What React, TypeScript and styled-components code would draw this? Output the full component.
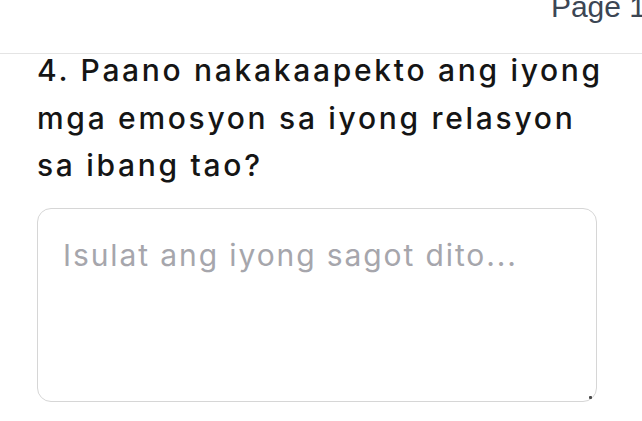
import React from 'react';
import styled, { createGlobalStyle } from 'styled-components';

const GlobalStyle = createGlobalStyle`
  html, body {
    margin: 0;
    padding: 0;
    background: #ffffff;
    overflow: hidden;
  }
  * {
    box-sizing: border-box;
  }
`;

const Styled = {
  Page: styled.div`
    width: 642px;
    height: 421px;
    display: flex;
    flex-direction: column;
    background: #ffffff;
  `,
  TopBar: styled.header`
    height: 54px;
    display: flex;
    justify-content: flex-end;
    align-items: flex-start;
    border-bottom: 1px solid #e4e4e4;
  `,
  PageLabel: styled.span`
    margin-top: -8px;
    margin-right: -4px;
    font-family: 'Liberation Sans', Arial, sans-serif;
    font-size: 30px;
    line-height: 30px;
    color: #3c4654;
    white-space: nowrap;
  `,
  Content: styled.main`
    display: flex;
    flex-direction: column;
    gap: 18px;
    padding: 0 45px 0 37px;
  `,
  Question: styled.h2`
    margin: -7px 0 0;
    font-family: Inter, 'Noto Sans', sans-serif;
    font-size: 30px;
    font-weight: 500;
    line-height: 47.5px;
    letter-spacing: 2.7px;
    color: #151515;
    white-space: nowrap;
  `,
  Field: styled.div`
    position: relative;
    width: 560px;
    height: 194px;

    /* the small resize grip in the corner */
    &::after {
      content: '';
      position: absolute;
      right: 5px;
      bottom: 3px;
      width: 3px;
      height: 3px;
      border-radius: 1px;
      background: #4a4a4a;
    }
  `,
  Answer: styled.textarea`
    display: block;
    width: 100%;
    height: 100%;
    padding: 24px 25px;
    border: 1.5px solid #d6d6d6;
    border-radius: 14px;
    resize: none;
    outline: none;
    background: #ffffff;
    font-family: Inter, 'Noto Sans', sans-serif;
    font-size: 30px;
    font-weight: 400;
    line-height: 45px;
    letter-spacing: 1.9px;
    color: #222222;

    &::placeholder {
      color: #a6a6ac;
      opacity: 1;
    }
  `,
};

export default function App() {
  return (
    <>
      <GlobalStyle />
      <Styled.Page>
        <Styled.TopBar>
          <Styled.PageLabel>Page 1</Styled.PageLabel>
        </Styled.TopBar>
        <Styled.Content>
          <Styled.Question>
            4. Paano nakakaapekto ang iyong
            <br />
            mga emosyon sa iyong relasyon
            <br />
            sa ibang tao?
          </Styled.Question>
          <Styled.Field>
            <Styled.Answer placeholder="Isulat ang iyong sagot dito..." />
          </Styled.Field>
        </Styled.Content>
      </Styled.Page>
    </>
  );
}
